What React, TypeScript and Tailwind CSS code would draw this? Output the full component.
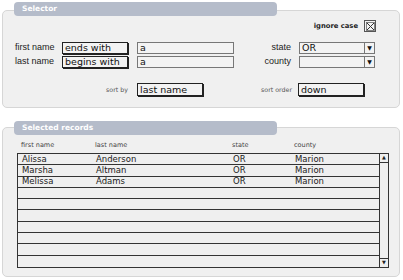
import React from "react";

const rows = [
  { first: "Alissa", last: "Anderson", state: "OR", county: "Marion" },
  { first: "Marsha", last: "Altman", state: "OR", county: "Marion" },
  { first: "Melissa", last: "Adams", state: "OR", county: "Marion" },
];

function Tab({ title }: { title: string }) {
  return (
    <div className="relative z-10 ml-[12px] flex h-[14px] w-[263px] items-center rounded-[4px] bg-[#b5bcca] pl-[8px]">
      <span className="text-[7.5px] font-bold text-white">{title}</span>
    </div>
  );
}

function Field({ value, w, thick }: { value: string; w: string; thick?: boolean }) {
  return (
    <div
      className={`flex h-[12px] items-center bg-[#f3f3f3] pl-[2px] text-[9.5px] leading-none text-[#111] ${w} ${
        thick
          ? "border border-[#222] shadow-[1px_1px_0_#222]"
          : "border border-[#777]"
      }`}
    >
      {value}
    </div>
  );
}

function Select({ value }: { value: string }) {
  return (
    <div className="flex h-[12px] w-[76px] items-stretch border border-[#777] bg-[#f3f3f3] text-[9.5px] leading-none text-[#111]">
      <div className="flex flex-1 items-center pl-[2px]">{value}</div>
      <div className="flex w-[10px] items-center justify-center border-l border-[#777] text-[6px]">
        ▼
      </div>
    </div>
  );
}

export default function App() {
  return (
    <div className="h-[280px] w-[403px] overflow-hidden bg-white pt-[2px] pl-[2px] font-['DejaVu_Sans',sans-serif] text-[#222]">
      {/* selector */}
      <Tab title="Selector" />
      <div className="-mt-[6px] h-[98px] w-[398px] rounded-[5px] border border-[#d6d6d6] bg-[#f0f0f0]">
        <div className="mt-[9px] flex h-[12px] items-center justify-end pr-[23px]">
          <span className="mr-[6px] text-[6.8px] font-bold">ignore case</span>
          <div className="flex h-[12px] w-[12px] items-center justify-center border border-[#555] bg-[#f3f3f3]">
            <svg width="9" height="9" viewBox="0 0 9 9">
              <rect x="0.5" y="0.5" width="8" height="8" fill="none" stroke="#666" strokeWidth="0.8" />
              <path d="M1 1 L8 8 M8 1 L1 8" stroke="#333" strokeWidth="1" />
            </svg>
          </div>
        </div>
        <div className="mt-[10px] flex flex-col gap-[2px] pl-[12px]">
          {[
            { label: "first name", op: "ends with", v: "a", l2: "state", s: "OR" },
            { label: "last name", op: "begins with", v: "a", l2: "county", s: "" },
          ].map((r) => (
            <div key={r.label} className="flex h-[12px] items-center">
              <span className="w-[47px] font-['Liberation_Sans',sans-serif] text-[9px]">{r.label}</span>
              <Field value={r.op} w="w-[66px]" thick />
              <div className="w-[9px]" />
              <Field value={r.v} w="w-[97px]" />
              <span className="w-[65px] pr-[8px] text-right font-['Liberation_Sans',sans-serif] text-[9px]">
                {r.l2}
              </span>
              <Select value={r.s} />
            </div>
          ))}
        </div>
        <div className="mt-[15px] flex h-[13px] items-center pl-[12px]">
          <span className="w-[122px] pr-[9px] text-right text-[6.3px] text-[#555]">sort by</span>
          <Field value="last name" w="w-[66px] !h-[13px]" thick />
          <span className="w-[95px] pr-[6px] text-right text-[6.3px] text-[#555]">sort order</span>
          <Field value="down" w="w-[66px] !h-[13px]" thick />
        </div>
      </div>

      {/* selected records */}
      <div className="mt-[13px]">
        <Tab title="Selected records" />
      </div>
      <div className="-mt-[8px] h-[150px] w-[398px] rounded-[5px] border border-[#d6d6d6] bg-[#f0f0f0] pl-[14px]">
        <div className="mt-[13px] flex h-[10px] items-center text-[6.5px] text-[#444]">
          <span className="w-[78px] pl-[4px]">first name</span>
          <span className="w-[137px]">last name</span>
          <span className="w-[62px]">state</span>
          <span>county</span>
        </div>
        <div className="mt-[2px] flex">
          <div className="w-[363px] border border-[#333] bg-[#efefef]">
            {Array.from({ length: 10 }).map((_, i) => {
              const r = rows[i];
              return (
                <div
                  key={i}
                  className="flex h-[11.3px] items-center border-b border-[#333] text-[8.5px] leading-none text-[#222] last:border-b-0"
                >
                  {r && (
                    <>
                      <span className="w-[78px] pl-[4px]">{r.first}</span>
                      <span className="w-[137px]">{r.last}</span>
                      <span className="w-[62px]">{r.state}</span>
                      <span>{r.county}</span>
                    </>
                  )}
                </div>
              );
            })}
          </div>
          <div className="flex w-[9px] flex-col justify-between border border-l-0 border-[#333] bg-[#efefef]">
            <div className="flex h-[9px] items-center justify-center border-b border-[#333] text-[5px]">▲</div>
            <div className="flex h-[9px] items-center justify-center border-t border-[#333] text-[5px]">▼</div>
          </div>
        </div>
      </div>
    </div>
  );
}
